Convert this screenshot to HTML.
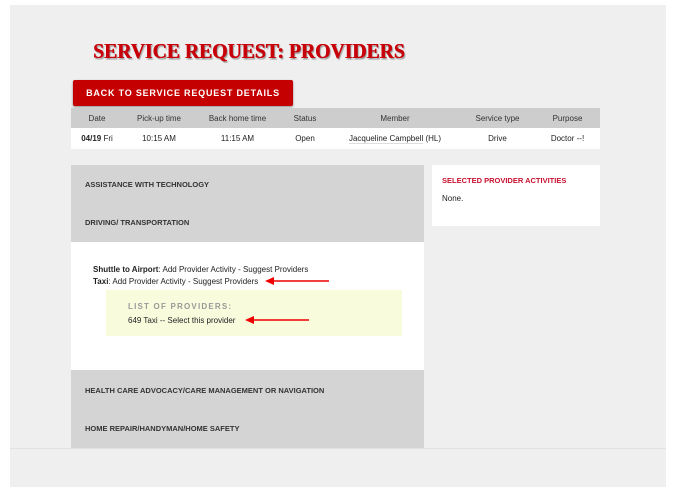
<!DOCTYPE html>
<html><head><style>
*{margin:0;padding:0;box-sizing:border-box}
body{width:676px;height:494px;background:#fff;font-family:"Liberation Sans",Arial,sans-serif;position:relative;overflow:hidden;color:#222}
.bg{position:absolute;left:10px;top:5px;width:656px;height:482px;background:#efefef}
.line{position:absolute;left:10px;top:448px;width:656px;height:1px;background:#e2e2e2}
h1{position:absolute;left:93px;top:39px;font-family:"Liberation Serif",serif;font-weight:900;font-size:21px;color:#c8000a;text-shadow:0.6px 0 0 #c8000a,1.5px 1.5px 1px #999;letter-spacing:0;transform:scaleX(0.937);transform-origin:left;white-space:nowrap}
.btn{position:absolute;left:73px;top:80px;width:220px;height:26px;background:#c40000;border-radius:2px;color:#fff;font-weight:bold;font-size:9px;letter-spacing:0.8px;line-height:26px;text-align:center;box-shadow:0 1px 2px #888}
table{position:absolute;left:71px;top:108px;width:529px;border-collapse:collapse;font-size:8px;text-align:center}
th{background:#cdcdcd;font-weight:normal;height:20px;color:#333}
td{background:#fff;height:21px;color:#222}
.g{position:absolute;left:71px;width:353px;background:#d4d4d4}
.g div{position:absolute;left:14px;font-size:7.5px;font-weight:bold;color:#333}
.w{position:absolute;left:71px;top:242px;width:353px;height:128px;background:#fff;font-size:8px}
.card{position:absolute;left:432px;top:165px;width:168px;height:61px;background:#fff;font-size:8px}
u{text-decoration:none;border-bottom:1px solid #ddd}
</style></head><body>
<div class="bg"></div><div class="line"></div>
<h1>SERVICE REQUEST: PROVIDERS</h1>
<div class="btn">BACK TO SERVICE REQUEST DETAILS</div>
<table>
<tr><th style="width:52px">Date</th><th style="width:72px">Pick-up time</th><th style="width:85px">Back home time</th><th style="width:50px">Status</th><th style="width:130px">Member</th><th style="width:75px">Service type</th><th>Purpose</th></tr>
<tr><td><b>04/19</b> Fri</td><td>10:15 AM</td><td>11:15 AM</td><td>Open</td><td><u>Jacqueline Campbell</u> (HL)</td><td>Drive</td><td>Doctor --!</td></tr>
</table>
<div class="g" style="top:165px;height:77px"><div style="top:15px">ASSISTANCE WITH TECHNOLOGY</div><div style="top:53px">DRIVING/ TRANSPORTATION</div></div>
<div class="w">
<div style="position:absolute;left:22px;top:23px"><b>Shuttle to Airport</b>: Add Provider Activity - Suggest Providers</div>
<div style="position:absolute;left:22px;top:35px"><b>Taxi</b>: Add Provider Activity - Suggest Providers</div>
<svg style="position:absolute;left:194px;top:34px" width="66" height="10"><line x1="6" y1="5" x2="64" y2="5" stroke="#e00" stroke-width="1.6"/><path d="M0 5L9 1V9Z" fill="#e00"/></svg>
<div style="position:absolute;left:35px;top:48px;width:296px;height:46px;background:#f8fbdc">
<div style="position:absolute;left:22px;top:12px;font-size:8px;font-weight:bold;color:#999;letter-spacing:1.2px">LIST OF PROVIDERS:</div>
<div style="position:absolute;left:22px;top:26px">649 Taxi -- Select this provider</div>
<svg style="position:absolute;left:139px;top:25px" width="66" height="10"><line x1="6" y1="5" x2="64" y2="5" stroke="#e00" stroke-width="1.6"/><path d="M0 5L9 1V9Z" fill="#e00"/></svg>
</div></div>
<div class="g" style="top:370px;height:78px"><div style="top:16px">HEALTH CARE ADVOCACY/CARE MANAGEMENT OR NAVIGATION</div><div style="top:54px">HOME REPAIR/HANDYMAN/HOME SAFETY</div></div>
<div class="card"><div style="position:absolute;left:10px;top:11px;color:#c8102e;font-weight:bold;font-size:7.5px">SELECTED PROVIDER ACTIVITIES</div><div style="position:absolute;left:10px;top:29px">None.</div></div>
</body></html>
